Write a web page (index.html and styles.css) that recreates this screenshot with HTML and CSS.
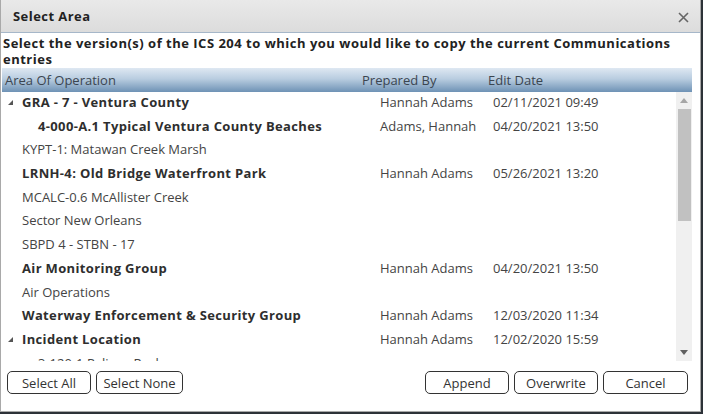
FILE: index.html
```html
<!DOCTYPE html>
<html>
<head>
<meta charset="utf-8">
<link rel="stylesheet" href="styles.css">
</head>
<body>
<div class="dialog">
  <div class="titlebar">
    <span class="title">Select Area</span>
    <span class="close"><svg width="11" height="11" viewBox="0 0 11 11"><path d="M1 1 L10 10 M10 1 L1 10" stroke="#666" stroke-width="1.6" fill="none"/></svg></span>
  </div>
  <div class="intro">Select the version(s) of the ICS 204 to which you would like to copy the current Communications entries</div>
  <div class="grid">
    <div class="grid-head">
      <span class="c-name">Area Of Operation</span>
      <span class="c-prep">Prepared By</span>
      <span class="c-date">Edit Date</span>
    </div>
    <div class="grid-body">
      <div class="rows">
        <div class="row bold"><span class="c-name"><span class="exp"><svg width="5" height="5" viewBox="0 0 5 5"><polygon points="5,0 5,5 0,5" fill="#555"/></svg></span>GRA - 7 - Ventura County</span><span class="c-prep">Hannah Adams</span><span class="c-date">02/11/2021 09:49</span></div>
        <div class="row bold child"><span class="c-name">4-000-A.1 Typical Ventura County Beaches</span><span class="c-prep">Adams, Hannah</span><span class="c-date">04/20/2021 13:50</span></div>
        <div class="row"><span class="c-name">KYPT-1: Matawan Creek Marsh</span><span class="c-prep"></span><span class="c-date"></span></div>
        <div class="row bold"><span class="c-name">LRNH-4: Old Bridge Waterfront Park</span><span class="c-prep">Hannah Adams</span><span class="c-date">05/26/2021 13:20</span></div>
        <div class="row"><span class="c-name">MCALC-0.6 McAllister Creek</span><span class="c-prep"></span><span class="c-date"></span></div>
        <div class="row"><span class="c-name">Sector New Orleans</span><span class="c-prep"></span><span class="c-date"></span></div>
        <div class="row"><span class="c-name">SBPD 4 - STBN - 17</span><span class="c-prep"></span><span class="c-date"></span></div>
        <div class="row bold"><span class="c-name">Air Monitoring Group</span><span class="c-prep">Hannah Adams</span><span class="c-date">04/20/2021 13:50</span></div>
        <div class="row"><span class="c-name">Air Operations</span><span class="c-prep"></span><span class="c-date"></span></div>
        <div class="row bold"><span class="c-name">Waterway Enforcement &amp; Security Group</span><span class="c-prep">Hannah Adams</span><span class="c-date">12/03/2020 11:34</span></div>
        <div class="row bold"><span class="c-name"><span class="exp"><svg width="5" height="5" viewBox="0 0 5 5"><polygon points="5,0 5,5 0,5" fill="#555"/></svg></span>Incident Location</span><span class="c-prep">Hannah Adams</span><span class="c-date">12/02/2020 15:59</span></div>
        <div class="row child"><span class="c-name">3-120-1 Pelican Rock</span><span class="c-prep"></span><span class="c-date"></span></div>
      </div>
      <div class="scrollbar">
        <div class="arrow up"><svg width="8" height="5" viewBox="0 0 8 5"><polygon points="0,5 8,5 4,0" fill="#a6a6a6"/></svg></div>
        <div class="track"><div class="thumb"></div></div>
        <div class="arrow down"><svg width="8" height="5" viewBox="0 0 8 5"><polygon points="0,0 8,0 4,5" fill="#606060"/></svg></div>
      </div>
    </div>
  </div>
  <div class="footer">
    <div class="btn-group">
      <button class="btn w84">Select All</button>
      <button class="btn w87">Select None</button>
    </div>
    <div class="btn-group">
      <button class="btn w84">Append</button>
      <button class="btn w84">Overwrite</button>
      <button class="btn w85">Cancel</button>
    </div>
  </div>
</div>
</body>
</html>
```
FILE: styles.css
```css
html, body {
  margin: 0;
  padding: 0;
  background: #2d3238;
}
body {
  font-family: "Open Sans", "Noto Sans", sans-serif;
  font-size: 13px;
  color: #333;
}
.dialog {
  width: 701px;
  height: 412px;
  box-sizing: border-box;
  border: 1px solid #a9a9a9;
  border-top: none;
  background: #fff;
  display: flex;
  flex-direction: column;
}
.titlebar {
  height: 33px;
  flex: none;
  box-sizing: border-box;
  background: linear-gradient(#e9e9e9, #dcdcdc);
  border-bottom: 1px solid #a6b7c9;
  display: flex;
  align-items: center;
  justify-content: space-between;
  padding: 0 11px 0 12px;
}
.title {
  font-weight: 700;
  color: #222;
  letter-spacing: 0.45px;
}
.close {
  display: flex;
  margin-top: 2px;
}
.intro {
  font-weight: 700;
  color: #222;
  line-height: 16px;
  padding: 2px 2px 1px 2px;
  letter-spacing: 0.5px;
  max-width: 670px;
}
.grid {
  margin: 0 8px 0 1px;
  display: flex;
  flex-direction: column;
}
.grid-head {
  height: 24px;
  display: flex;
  align-items: center;
  background: linear-gradient(#dee8f2, #b9cde0 45%, #6e92b5);
  color: #3b4550;
}
.grid-head .c-name { padding-left: 3px; width: 357px; }
.grid-head .c-prep { width: 126px; }
.grid-body {
  height: 269px;
  display: flex;
  overflow: hidden;
}
.rows {
  flex: 1;
  display: flex;
  flex-direction: column;
  padding-top: 1px;
}
.row {
  height: 23.7px;
  flex: none;
  display: flex;
  line-height: 18px;
  color: #444;
}
.row.bold { font-weight: 700; color: #2e2e2e; }
.row.bold .c-name { letter-spacing: 0.35px; }
.row .c-name {
  width: 358px;
  padding-left: 20px;
  display: flex;
  align-items: center;
  height: 18px;
  position: relative;
  white-space: nowrap;
}
.row.child .c-name { padding-left: 36px; width: 342px; }
.row .c-prep { width: 113px; font-weight: 400; color: #444; }
.row .c-date { font-weight: 400; color: #444; }
.exp {
  position: absolute;
  left: 6px;
  top: 7px;
  display: flex;
}
.scrollbar {
  width: 16px;
  flex: none;
  background: #f0f0f0;
  display: flex;
  flex-direction: column;
  align-items: center;
}
.arrow {
  height: 17px;
  display: flex;
  align-items: center;
  justify-content: center;
  flex: none;
}
.track {
  flex: 1;
  width: 100%;
}
.thumb {
  margin-left: 2px;
  width: 13px;
  height: 112px;
  background: #c1c1c1;
}
.footer {
  display: flex;
  justify-content: space-between;
  padding: 10px 12px 0 6px;
}
.btn-group {
  display: flex;
  gap: 5px;
}
.btn {
  height: 23px;
  box-sizing: border-box;
  border: 1px solid #333;
  border-radius: 5px;
  background: #fff;
  font-family: "Open Sans", "Noto Sans", sans-serif;
  font-size: 13px;
  color: #333;
  padding: 0;
}
.w84 { width: 84px; }
.w85 { width: 85px; }
.w87 { width: 87px; }
```
